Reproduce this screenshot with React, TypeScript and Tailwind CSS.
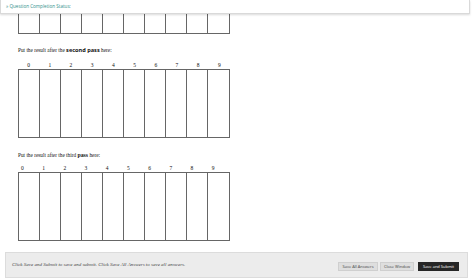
const cols = [0, 1, 2, 3, 4, 5, 6, 7, 8, 9];

function Grid({ className = '' }: { className?: string }) {
  return (
    <div className={`grid grid-cols-10 h-[69px] w-[212px] border border-[#666] ${className}`}>
      {cols.map((c) => (
        <div key={c} className={c < 9 ? 'border-r border-[#666]' : ''} />
      ))}
    </div>
  );
}

function Header({ align }: { align: 'center' | 'left' }) {
  return (
    <div className="grid grid-cols-10 w-[212px] h-[7px] text-[5.5px] leading-[7px] text-[#111]">
      {cols.map((c) => (
        <div key={c} className={align === 'center' ? 'text-center' : 'text-left pl-[3px]'}>
          {c}
        </div>
      ))}
    </div>
  );
}

export default function App() {
  return (
    <div
      className="relative w-[474px] h-[278px] overflow-hidden bg-white"
      style={{ fontFamily: '"Liberation Serif", serif' }}
    >
      {/* status bar */}
      <div className="absolute left-0 top-0 z-10 w-[470px] h-[14px] bg-white border border-t-0 border-[#d9d9d9] shadow-[0_1px_2px_rgba(0,0,0,0.15)] flex items-center pl-[5px]">
        <span className="text-[4.6px] text-[#2f8f8a]" style={{ fontFamily: '"Open Sans", sans-serif' }}>
          » Question Completion Status:
        </span>
      </div>

      <div className="pl-[18px]">
        <Grid className="mt-[-35px]" />

        <p className="mt-[13px] h-[7px] text-[5.3px] leading-[7px] text-[#111]">
          Put the result after the{' '}
          <b className="font-bold text-[5.6px]" style={{ fontFamily: '"Open Sans", sans-serif' }}>
            second pass
          </b>{' '}
          here:
        </p>
        <div className="mt-[8px]">
          <Header align="center" />
        </div>
        <Grid />

        <p className="mt-[14px] h-[7px] text-[5.3px] leading-[7px] text-[#111]">
          Put the result after the third{' '}
          <b className="font-bold text-[5.8px]">pass</b> here:
        </p>
        <div className="mt-[6px]">
          <Header align="left" />
        </div>
        <Grid className="h-[68px]" />
      </div>

      {/* bottom bar */}
      <div className="absolute left-[5px] top-[252px] w-[463px] h-[26px] bg-[#ececec] border border-[#dcdcdc] flex items-center justify-between pl-[6px] pr-[8px]">
        <span className="italic text-[5px] text-[#444]">
          Click Save and Submit to save and submit. Click Save All Answers to save all answers.
        </span>
        <div className="flex items-center gap-[2px] pt-[3px]" style={{ fontFamily: '"Open Sans", sans-serif' }}>
          <button className="h-[9px] w-[40px] bg-[#dedede] border border-[#cfcfcf] text-[4px] text-[#444]">
            Save All Answers
          </button>
          <button className="h-[9px] w-[34px] bg-[#dedede] border border-[#cfcfcf] text-[4px] text-[#444]">
            Close Window
          </button>
          <button className="ml-[2px] h-[9px] w-[41px] bg-[#262626] text-[4px] text-white">
            Save and Submit
          </button>
        </div>
      </div>
    </div>
  );
}
